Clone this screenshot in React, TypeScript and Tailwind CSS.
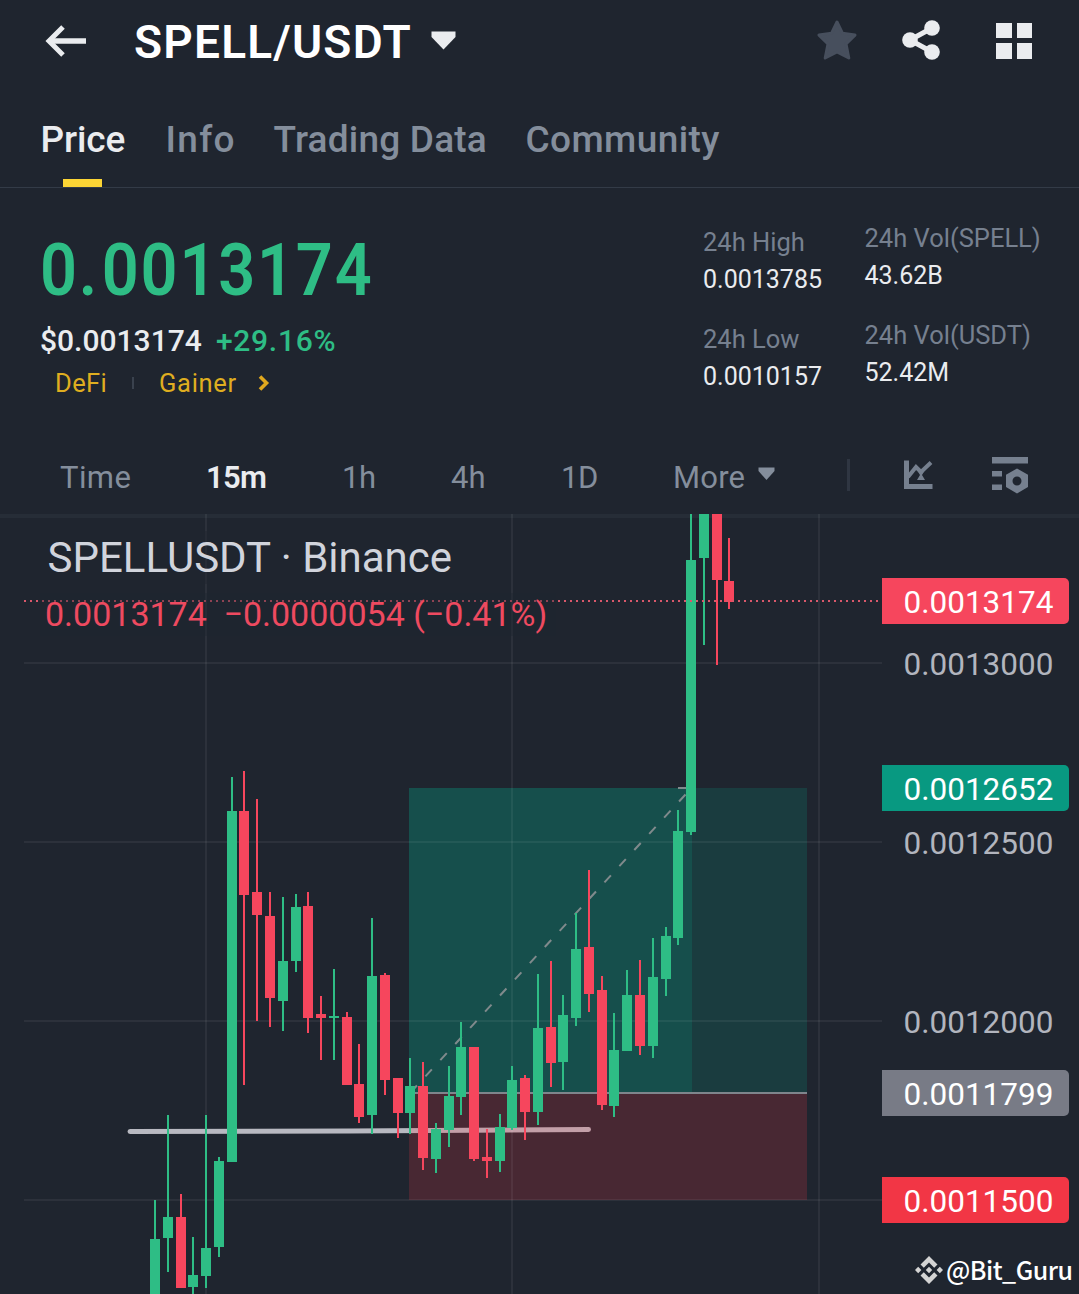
const tabs = [
  { label: "Price", style: "w-[125px] tracking-[-0.1px] text-[#eaecef]", active: true },
  { label: "Info", style: "w-[108px] tracking-[1.3px] text-[#848e9c]" },
  { label: "Trading Data", style: "w-[252px] tracking-[0.2px] text-[#848e9c]" },
  { label: "Community", style: "w-[220px] tracking-[0.4px] text-[#848e9c]" },
];

const intervals = [
  { label: "Time", style: "w-[146px] tracking-[0.4px] text-[#848e9c]" },
  { label: "15m", style: "w-[136px] font-semibold tracking-[-0.7px] text-[#eaecef]" },
  { label: "1h", style: "w-[109px] tracking-[-0.5px] text-[#848e9c]" },
  { label: "4h", style: "w-[110px] text-[#848e9c]" },
  { label: "1D", style: "w-[112px] tracking-[-0.5px] text-[#848e9c]" },
];

const UP = "#2ebd85";
const DOWN = "#f6465d";

// [x, high, body top, body bottom, low, color]
const candles: [number, number, number, number, number, string][] = [
  [155, 1200, 1239, 1300, 1300, UP],
  [168, 1115, 1217, 1238, 1272, UP],
  [181, 1194, 1217, 1288, 1288, DOWN],
  [193, 1237, 1275, 1287, 1300, UP],
  [206, 1115, 1248, 1276, 1288, UP],
  [219, 1157, 1161, 1247, 1257, UP],
  [232, 777, 811, 1162, 1162, UP],
  [244, 771, 811, 895, 1085, DOWN],
  [257, 799, 892, 915, 1021, DOWN],
  [270, 892, 916, 998, 1027, DOWN],
  [283, 897, 961, 1001, 1031, UP],
  [296, 894, 907, 961, 972, UP],
  [308, 892, 906, 1018, 1033, DOWN],
  [321, 996, 1014, 1018, 1060, DOWN],
  [334, 969, 1016, 1018, 1060, UP],
  [347, 1012, 1017, 1085, 1085, DOWN],
  [359, 1044, 1084, 1117, 1123, DOWN],
  [372, 918, 976, 1115, 1134, UP],
  [385, 973, 975, 1080, 1095, DOWN],
  [398, 1078, 1078, 1113, 1138, DOWN],
  [410, 1058, 1086, 1113, 1134, UP],
  [423, 1062, 1086, 1158, 1170, DOWN],
  [436, 1123, 1129, 1159, 1173, UP],
  [449, 1066, 1096, 1130, 1147, UP],
  [461, 1022, 1047, 1097, 1115, UP],
  [474, 1047, 1047, 1159, 1161, DOWN],
  [487, 1129, 1157, 1161, 1178, DOWN],
  [500, 1114, 1127, 1161, 1172, UP],
  [512, 1066, 1080, 1128, 1130, UP],
  [525, 1075, 1078, 1112, 1140, DOWN],
  [538, 974, 1028, 1112, 1125, UP],
  [551, 961, 1027, 1063, 1087, DOWN],
  [563, 995, 1015, 1062, 1090, UP],
  [576, 913, 949, 1018, 1026, UP],
  [589, 870, 947, 994, 1012, DOWN],
  [602, 976, 990, 1105, 1110, DOWN],
  [614, 1013, 1050, 1106, 1117, UP],
  [627, 970, 995, 1051, 1051, UP],
  [640, 960, 995, 1046, 1055, DOWN],
  [653, 938, 977, 1046, 1058, UP],
  [666, 927, 936, 979, 996, UP],
  [678, 810, 831, 938, 945, UP],
  [691, 514, 560, 832, 835, UP],
  [704, 514, 514, 558, 645, UP],
  [717, 514, 514, 580, 665, DOWN],
  [729, 538, 581, 602, 609, DOWN],
];

const axisLabels = [
  { value: "0.0013174", style: "top-[64px] bg-[#f6465d] text-white" },
  { value: "0.0013000", style: "top-[126px] text-[#b2b5be]" },
  { value: "0.0012652", style: "top-[251px] bg-[#089981] text-white" },
  { value: "0.0012500", style: "top-[305px] text-[#b2b5be]" },
  { value: "0.0012000", style: "top-[484px] text-[#b2b5be]" },
  { value: "0.0011799", style: "top-[556px] bg-[#787b86] text-white" },
  { value: "0.0011500", style: "top-[663px] bg-[#f23645] text-white" },
];

function Header() {
  return (
    <header className="flex h-[81px] items-center">
      <svg className="ml-[45px] h-8 w-[42px]" viewBox="0 0 42 32" fill="none" stroke="#eaecef">
        <path d="M41 16H4" strokeWidth="5.6" />
        <path d="M18 2L4 16L18 30" strokeWidth="5" />
      </svg>
      <h1 className="ml-[47px] w-[297px] pt-[3px] text-[46px] leading-[80px] font-semibold tracking-[1.2px] whitespace-nowrap text-white">
        SPELL/USDT
      </h1>
      <svg className="h-[19px] w-[25px]" viewBox="0 0 25 19" fill="#eaecef">
        <path d="M0.5 0.5H24.5V6L12.5 18.5L0.5 6Z" />
      </svg>
      <svg className="mb-px ml-[361px] h-10 w-10" viewBox="0 0 40 40" fill="#474f5d" stroke="#474f5d" strokeWidth="3" strokeLinejoin="round">
        <path d="M20 2L25.4 13.2L38 15.1L29 23.9L31.8 38L20 32L8.2 38L11 23.9L2 15.1L14.6 13.2Z" />
      </svg>
      <svg className="mb-px ml-[44px] h-10 w-10" viewBox="0 0 40 40" fill="#eaecef">
        <path d="M31 8L9 20L31 32" fill="none" stroke="#eaecef" strokeWidth="5" />
        <circle cx="9" cy="20" r="7.8" />
        <circle cx="31" cy="8" r="7.8" />
        <circle cx="31" cy="32" r="7.8" />
      </svg>
      <div className="ml-[55px] grid grid-cols-2 gap-[5px]">
        <span className="size-[15.5px] bg-[#eaecef]" />
        <span className="size-[15.5px] bg-[#eaecef]" />
        <span className="size-[15.5px] bg-[#eaecef]" />
        <span className="size-[15.5px] bg-[#eaecef]" />
      </div>
    </header>
  );
}

function Tabs() {
  return (
    <nav className="flex h-[107px] border-b border-[#333b47] pl-[40.5px] text-[37px] font-medium">
      {tabs.map((tab) => (
        <div key={tab.label} className={`flex flex-col justify-between whitespace-nowrap ${tab.style}`}>
          <span className="mt-[37px] leading-[44px]">{tab.label}</span>
          {tab.active && <span className="ml-[22.5px] h-2 w-[39px] bg-[#fcd535]" />}
        </div>
      ))}
    </nav>
  );
}

function Stat({ label, value }: { label: string; value: string }) {
  return (
    <div className="h-[97px] whitespace-nowrap">
      <p className="text-[25.5px] leading-[38px] text-[#76808f]">{label}</p>
      <p className="text-[25px] leading-[38px] text-[#eaecef]">{value}</p>
    </div>
  );
}

function Summary() {
  return (
    <section className="flex h-[248px]">
      <div className="w-[703px] pl-[40px] whitespace-nowrap">
        <p className="mt-[41px] origin-left scale-x-90 text-[72px] leading-[84px] font-semibold tracking-[2px] text-[#2ebd85]">
          0<span className="tracking-[5px]">.</span>0013174
        </p>
        <div className="mt-[9px] flex text-[30px] leading-[38px] font-medium">
          <span className="w-[176px] text-[#eaecef]">$0.0013174</span>
          <span className="tracking-[0.7px] text-[#2ebd85]">+29.16%</span>
        </div>
        <div className="mt-[5px] flex items-center pl-[15px] text-[25.5px] leading-[36px] text-[#dfae20]">
          <span className="w-[77px] tracking-[0.4px]">DeFi</span>
          <span className="h-3 w-[2px] bg-[#3a424e]" />
          <span className="ml-[25px] w-[99px] tracking-[0.7px]">Gainer</span>
          <svg className="h-4 w-3" viewBox="0 0 12 16" fill="none" stroke="#e0a81e" strokeWidth="3.6">
            <path d="M2 1.5L8.5 8L2 14.5" />
          </svg>
        </div>
      </div>
      <div className="w-[161.5px] pt-[34.5px]">
        <Stat label="24h High" value="0.0013785" />
        <Stat label="24h Low" value="0.0010157" />
      </div>
      <div className="pt-[31px]">
        <Stat label="24h Vol(SPELL)" value="43.62B" />
        <Stat label="24h Vol(USDT)" value="52.42M" />
      </div>
    </section>
  );
}

function IntervalBar() {
  return (
    <div className="flex h-[78px] items-center pl-[60px] text-[31px] whitespace-nowrap">
      {intervals.map((item) => (
        <span key={item.label} className={`pt-[7px] ${item.style}`}>
          {item.label}
        </span>
      ))}
      <span className="w-[85px] pt-[7px] tracking-[0.2px] text-[#848e9c]">More</span>
      <svg className="mb-[3px] h-[14px] w-[17px]" viewBox="0 0 17 14" fill="#848e9c">
        <path d="M0.5 0.5H16.5V4L8.5 13L0.5 4Z" />
      </svg>
      <span className="ml-[72px] h-8 w-[3px] bg-[#2f3642]" />
      <svg className="ml-[54px] h-[30px] w-[29px]" viewBox="0 0 29 30" fill="none" stroke="#76808f">
        <path d="M2.5 0.5V26.5H28.5" strokeWidth="5" />
        <path d="M4 17L12 7L17 12L27 2.5" strokeWidth="4" />
        <path d="M13 10H21L18 15L21 20H13L16 15Z" fill="#76808f" stroke="none" />
      </svg>
      <svg className="ml-[59px] h-[38px] w-[37px]" viewBox="0 0 37 38" fill="#76808f">
        <path d="M0 1H36V7.5H0ZM0 15H10V20.5H0ZM0 28.5H10V34H0Z" />
        <path
          fillRule="evenodd"
          d="M25 12.5L36 18.7V31L25 37.5L14 31V18.7ZM25 20.5A4.5 4.5 0 1 0 25 29.5A4.5 4.5 0 1 0 25 20.5Z"
        />
      </svg>
    </div>
  );
}

function Chart() {
  return (
    <svg className="block h-[780px] w-[1079px]" viewBox="0 514 1079 780" shapeRendering="crispEdges">
      <rect x="0" y="514" width="1079" height="4" fill="#262d37" />

      <path d="M130 1131.5L350 1131L588.5 1129.5" stroke="#b8b9c1" strokeWidth="5" strokeLinecap="round" fill="none" shapeRendering="auto" />

      {/* long position box */}
      <rect x="409" y="787.5" width="398" height="305.5" fill="#089981" fillOpacity="0.2" />
      <rect x="409" y="787.5" width="283" height="305.5" fill="#089981" fillOpacity="0.2" />
      <rect x="409" y="1093" width="398" height="107" fill="#f23645" fillOpacity="0.2" />

      <g fill="#ffffff" fillOpacity="0.06">
        {[662, 841, 1020, 1199].map((y) => (
          <rect key={y} x="24" y={y} width="858" height="2" />
        ))}
        {[205, 511, 818].map((x) => (
          <rect key={x} x={x} y="514" width="2" height="780" />
        ))}
      </g>

      <rect x="409" y="1092" width="398" height="2" fill="#7f858c" />
      <path d="M685.5 794.5L410 1093" stroke="#808a8c" strokeWidth="2" strokeDasharray="9.5 12.5" fill="none" shapeRendering="auto" />
      <rect x="678" y="787" width="10" height="2" fill="#808a8c" />

      {candles.map(([x, high, top, bottom, low, color]) => (
        <g key={x} fill={color}>
          <rect x={x - 1} y={high} width="2" height={low - high} />
          <rect x={x - 5} y={top} width="10" height={bottom - top} />
        </g>
      ))}

      <path d="M24 601H880" stroke="#d9586b" strokeWidth="2" strokeDasharray="2 4" />
    </svg>
  );
}

function Legend() {
  return (
    <div className="absolute top-[17px] left-[40px] whitespace-nowrap">
      <p className="w-[420px] bg-[#1f252f]/50 pl-[7.5px] text-[42px] leading-[53px] text-[#d1d4dc]">
        SPELLUSDT · Binance
      </p>
      <p className="mt-[9px] flex w-[516px] bg-[#1f252f]/40 pl-[5px] text-[34px] leading-[43px] text-[#ee4a60]">
        <span className="w-[178.5px]">0.0013174</span>
        <span>−0.0000054 (−0.41%)</span>
      </p>
    </div>
  );
}

function Watermark() {
  return (
    <div className="absolute top-[738px] left-[915px] flex items-center font-['Noto_Sans_CJK_SC','Noto_Sans',sans-serif] text-[25px] leading-[36px] font-medium tracking-[-0.5px] text-white">
      <svg className="mr-[3px] h-7 w-7" viewBox="0 0 28 28" fill="#d4d4d4">
        <path d="M14 0L22.5 8.5L19.2 11.8L14 6.6L8.8 11.8L5.5 8.5Z" />
        <path d="M14 28L5.5 19.5L8.8 16.2L14 21.4L19.2 16.2L22.5 19.5Z" />
        <path d="M14 10.8L17.2 14L14 17.2L10.8 14ZM3.2 10.8L6.4 14L3.2 17.2L0 14ZM24.8 10.8L28 14L24.8 17.2L21.6 14Z" />
      </svg>
      <span className="-mt-px">@Bit_Guru</span>
    </div>
  );
}

export default function App() {
  return (
    <div className="h-[1294px] w-[1079px] overflow-hidden bg-[#1f252f] font-[Roboto,sans-serif]">
      <Header />
      <Tabs />
      <Summary />
      <IntervalBar />
      <main className="relative">
        <Chart />
        <Legend />
        {axisLabels.map((item) => (
          <span
            key={item.value}
            className={`absolute left-[882px] h-[46px] w-[187px] rounded-r-[5px] pl-[21.5px] text-[31.5px] leading-[50px] ${item.style}`}>
            {item.value}
          </span>
        ))}
        <Watermark />
      </main>
    </div>
  );
}
